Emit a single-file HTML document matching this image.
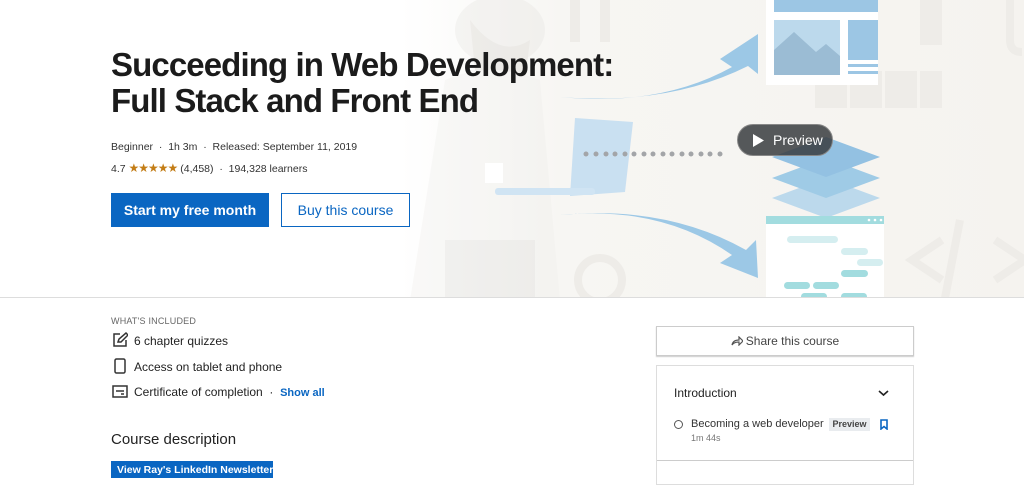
<!DOCTYPE html>
<html><head><meta charset="utf-8"><style>
*{margin:0;padding:0;box-sizing:border-box}
body{width:1024px;height:478px;overflow:hidden;background:#fff;font-family:"Liberation Sans",Arial,sans-serif;color:#1f1f1f;position:relative}
.hero{position:absolute;left:0;top:0;width:1024px;height:298px;background:linear-gradient(90deg,#fff 0,#fff 400px,#f7f6f3 560px,#f5f3ef 100%);border-bottom:1px solid #ddd;overflow:hidden}
.abs{position:absolute}
h1{position:absolute;left:111px;top:47px;font-size:33px;line-height:36px;font-weight:bold;color:#1b1b1b;letter-spacing:-0.9px;white-space:nowrap}
.meta{position:absolute;left:111px;font-size:10.5px;color:#333}
.btn{position:absolute;top:193px;height:34px;font-size:14px;display:flex;align-items:center;justify-content:center;font-weight:bold}
.small{font-size:12px;color:#222}
</style></head><body>
<div class="hero">
<svg class="abs" style="left:0;top:0" width="1024" height="298">
 <g fill="#eeece8">
  <rect x="570" y="0" width="10" height="42"/><rect x="600" y="0" width="10" height="42"/>
  <rect x="850" y="0" width="10" height="50"/>
  <rect x="815" y="71" width="32" height="37"/><rect x="850" y="71" width="32" height="37"/><rect x="885" y="71" width="32" height="37"/>
  <rect x="920" y="71" width="22" height="37"/>
  <rect x="920" y="0" width="22" height="45"/>
 </g>
 <g stroke="#eeece8" stroke-width="8" fill="none"><path d="M1010 0 v40 q0 12 12 12"/><path d="M942 240 l-30 20 l30 20"/><path d="M960 220 l-15 78"/><path d="M995 240 l30 20 l-30 20"/><circle cx="600" cy="280" r="22"/></g>
 <g opacity=".3">
  <ellipse cx="500" cy="30" rx="45" ry="35" fill="#e4e2de"/>
  <path d="M470 20 q30 40 60 20 l-5 40 q-30 10 -50 -10z" fill="#cfcbc4"/>
  <path d="M445 80 q45-20 95 0 l20 220 h-150z" fill="#eeedea"/>
  <rect x="445" y="240" width="90" height="60" fill="#d6d5d2"/>
 </g>
 <path d="M575 118 l58 4 l-8 70 l-55 4z" fill="#c9e0f1"/>
 <rect x="495" y="188" width="100" height="7" rx="3" fill="#d0e4f3"/>
 <rect x="485" y="163" width="18" height="20" fill="#fff"/>
 <path d="M560 97 q100 10 172 -30 l-12 -8 l38 -25 l0 40 l-10 -8 q-80 40 -188 31z" fill="#9cc8e6"/>
 <path d="M560 215 q100 -10 172 40 l-12 8 l38 15 l-2 -38 l-10 10 q-80 -45 -186 -35z" fill="#9cc8e6"/>
 <rect x="766" y="0" width="112" height="85" fill="#fff"/>
 <rect x="774" y="0" width="104" height="12" fill="#9cc6e4"/>
 <rect x="774" y="20" width="66" height="55" fill="#bcd9ec"/>
 <path d="M774 75 v-25 l20 -18 l22 20 l10 -8 l14 12 v19z" fill="#9bbcd4"/>
 <rect x="848" y="20" width="30" height="40" fill="#9cc6e4"/>
 <rect x="848" y="64" width="30" height="3" fill="#9cc6e4"/><rect x="848" y="71" width="30" height="3" fill="#9cc6e4"/>
 <path d="M772 198 l54 -20 l54 20 l-54 20z" fill="#bcd9ec"/>
 <path d="M772 178 l54 -20 l54 20 l-54 20z" fill="#9fcbe6"/>
 <path d="M772 157 l54 -20 l54 20 l-54 20z" fill="#93c1e2"/>
 <g fill="#a3a5a8"><circle cx="586" cy="154" r="2.5"/><circle cx="596" cy="154" r="2.5"/><circle cx="606" cy="154" r="2.5"/><circle cx="615" cy="154" r="2.5"/><circle cx="625" cy="154" r="2.5"/><circle cx="634" cy="154" r="2.5"/><circle cx="644" cy="154" r="2.5"/><circle cx="653" cy="154" r="2.5"/><circle cx="663" cy="154" r="2.5"/><circle cx="672" cy="154" r="2.5"/><circle cx="682" cy="154" r="2.5"/><circle cx="691" cy="154" r="2.5"/><circle cx="701" cy="154" r="2.5"/><circle cx="710" cy="154" r="2.5"/><circle cx="720" cy="154" r="2.5"/></g>
 <rect x="766" y="216" width="118" height="82" fill="#fff"/>
 <rect x="766" y="216" width="118" height="8" fill="#a2dcdf"/>
 <g fill="#fff"><circle cx="869" cy="220" r="1.3"/><circle cx="875" cy="220" r="1.3"/><circle cx="881" cy="220" r="1.3"/></g>
 <rect x="787" y="236" width="51" height="7" rx="3.5" fill="#d5eef0"/>
 <rect x="841" y="248" width="27" height="7" rx="3.5" fill="#d5eef0"/>
 <rect x="857" y="259" width="26" height="7" rx="3.5" fill="#d5eef0"/>
 <rect x="841" y="270" width="27" height="7" rx="3.5" fill="#a2dcdf"/>
 <rect x="784" y="282" width="26" height="7" rx="3.5" fill="#a2dcdf"/>
 <rect x="813" y="282" width="26" height="7" rx="3.5" fill="#a2dcdf"/>
 <rect x="801" y="293" width="26" height="7" rx="3.5" fill="#a2dcdf"/>
 <rect x="841" y="293" width="26" height="7" rx="3.5" fill="#a2dcdf"/>
</svg>
<div class="abs" style="left:737px;top:124px;width:96px;height:32px;border-radius:16px;background:rgba(56,60,64,.85);border:1px solid #888;color:#fff;font-size:14px;display:flex;align-items:center;padding-left:14px">
<svg width="12" height="13" style="margin-right:9px"><path d="M1 0 L12 6.5 L1 13z" fill="#fff"/></svg>Preview</div>
<h1>Succeeding in Web Development:<br>Full Stack and Front End</h1>
<div class="meta" style="top:141px">Beginner &nbsp;·&nbsp; 1h 3m &nbsp;·&nbsp; Released: September 11, 2019</div>
<div class="meta" style="top:161px">4.7 <span style="color:#c37d16;font-size:12px;letter-spacing:-1px">★★★★★</span> (4,458) &nbsp;·&nbsp; 194,328 learners</div>
<div class="btn" style="left:111px;width:158px;background:#0a66c2;color:#fff">Start my free month</div>
<div class="btn" style="left:281px;width:129px;border:1px solid #0a66c2;color:#0a66c2;background:#fff;font-weight:normal">Buy this course</div>
</div>

<div class="abs" style="left:111px;top:316px;font-size:9px;color:#666;letter-spacing:.2px">WHAT'S INCLUDED</div>
<svg class="abs" style="left:112px;top:332px" width="16" height="72" fill="none" stroke="#333" stroke-width="1.5">
 <path d="M8 2 H2 V14 H14 V8"/><path d="M6 10 l1-3 l7-6 l2 2 l-7 7z"/>
 <rect x="3" y="27" width="10" height="14" rx="1.5"/>
 <rect x="1" y="54" width="14" height="11"/><path d="M4 59 h8 M9 62 h3"/>
</svg>
<div class="abs small" style="left:134px;top:334px">6 chapter quizzes</div>
<div class="abs small" style="left:134px;top:360px">Access on tablet and phone</div>
<div class="abs small" style="left:134px;top:385px">Certificate of completion &nbsp;·&nbsp; <span style="color:#0a66c2;font-size:11px;font-weight:bold">Show all</span></div>
<div class="abs" style="left:111px;top:431px;font-size:15px;color:#222">Course description</div>
<div class="abs" style="left:111px;top:461px;width:162px;height:17px;background:#0a66c2;color:#fff;font-size:10.5px;font-weight:bold;padding:3px 0 0 6px;white-space:nowrap;overflow:hidden">View Ray's LinkedIn Newsletter</div>

<div class="abs" style="left:656px;top:326px;width:258px;height:30px;border:1px solid #ccc;box-shadow:0 1px 1px #ccc;display:flex;align-items:center;justify-content:center;font-size:12px;color:#444">
<svg width="12" height="10" style="margin-right:3px"><path d="M1 9 q1-5 7-5 V1 l4 4 l-4 4 V6 q-5 0-7 3z" fill="none" stroke="#555" stroke-width="1.2"/></svg>Share this course</div>
<div class="abs" style="left:656px;top:365px;width:258px;height:120px;border:1px solid #ddd"></div>
<div class="abs" style="left:657px;top:460px;width:256px;height:1px;background:#ccc"></div>
<div class="abs" style="left:674px;top:386px;font-size:12px;color:#222">Introduction</div>
<svg class="abs" style="left:878px;top:390px" width="11" height="7"><path d="M1 1 l4.5 4 l4.5-4" stroke="#222" stroke-width="1.6" fill="none"/></svg>
<div class="abs" style="left:674px;top:420px;width:9px;height:9px;border:1px solid #555;border-radius:50%"></div>
<div class="abs" style="left:691px;top:418px;font-size:11px;color:#333">Becoming a web developer</div>
<div class="abs" style="left:691px;top:433px;font-size:9px;color:#777">1m 44s</div>
<div class="abs" style="left:829px;top:418px;width:41px;height:13px;background:#e9ecef;font-size:9px;font-weight:bold;color:#444;text-align:center;line-height:13px">Preview</div>
<svg class="abs" style="left:880px;top:419px" width="8" height="11"><path d="M1 1 h6 v9 l-3-2.5 l-3 2.5z" fill="none" stroke="#0a66c2" stroke-width="1.6"/></svg>
</body></html>
